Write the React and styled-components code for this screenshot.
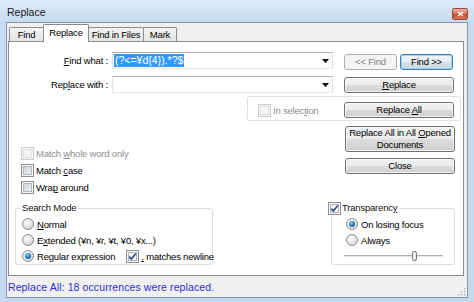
import React from "react";
import styled, { createGlobalStyle, css } from "styled-components";

const UI_FONT = `"Liberation Sans", Arial, sans-serif`;

const GlobalStyle = createGlobalStyle`
  html, body {
    margin: 0;
    padding: 0;
    background: #c6d9ee;
  }
  body {
    width: 474px;
    height: 302px;
    overflow: hidden;
  }
  * {
    box-sizing: border-box;
  }
`;

const Window = styled.div`
  width: 474px;
  height: 302px;
  display: flex;
  flex-direction: column;
  padding: 0 6px 4px;
  background: linear-gradient(180deg, #dfeaf7 0px, #d2e2f4 11px, #c8dbf0 22px, #c4d8ee 100%);
  font-family: ${UI_FONT};
  font-size: 9.5px;
  letter-spacing: -0.2px;
  color: #000;
`;

const TitleBar = styled.div`
  height: 22px;
  flex: none;
  display: flex;
  align-items: flex-start;
  justify-content: space-between;
  padding: 0 0 0 1px;
`;

const Title = styled.span`
  margin-top: 6px;
  font-size: 10.5px;
  letter-spacing: 0;
  line-height: 12px;
  color: #1b1b1b;
`;

const CloseButton = styled.div`
  margin-top: 8px;
  width: 16px;
  height: 12px;
  border: 1px solid #9a4a38;
  border-radius: 2px;
  background: linear-gradient(180deg, #eab2a2 0%, #d97a60 45%, #c7492e 55%, #d8745a 100%);
  display: flex;
  align-items: center;
  justify-content: center;
`;

const Client = styled.div`
  flex: 1;
  display: flex;
  flex-direction: column;
  background: #f0f0f0;
  border: 1px solid #8795a8;
`;

const TabArea = styled.div`
  padding: 1px 3px 0 1px;
  display: flex;
  flex-direction: column;
`;

const TabStrip = styled.div`
  height: 18px;
  display: flex;
  align-items: flex-end;
  padding-left: 2px;
  position: relative;
  z-index: 1;
`;

const Tab = styled.div`
  width: ${(p) => p.$w}px;
  height: ${(p) => (p.$active ? 18 : 14)}px;
  margin-bottom: ${(p) => (p.$active ? 0 : 1)}px;
  margin-left: -1px;
  border: 1px solid #898c95;
  border-bottom: none;
  border-radius: 2px 2px 0 0;
  background: ${(p) => (p.$active ? "#fff" : "linear-gradient(180deg, #f3f3f3 0%, #e4e4e4 100%)")};
  position: relative;
  z-index: ${(p) => (p.$active ? 2 : 1)};
  display: flex;
  align-items: center;
  justify-content: center;
  padding-bottom: ${(p) => (p.$active ? 2 : 0)}px;
  line-height: 12px;
  white-space: nowrap;
`;

const Panel = styled.div`
  margin-top: -1px;
  height: 235px;
  background: #fff;
  border: 1px solid #898c95;
  display: flex;
  flex-direction: column;
  padding: 10px 0;
`;

const FieldRow = styled.div`
  display: flex;
  align-items: flex-start;
  height: ${(p) => p.$h}px;
  margin-top: ${(p) => p.$mt || 0}px;
`;

const FieldLabel = styled.span`
  width: 99px;
  margin-right: 4px;
  text-align: right;
  line-height: 17px;
  white-space: nowrap;
`;

const Combo = styled.div`
  width: 221px;
  height: 17px;
  border: 1px solid;
  border-color: #abadb3 #dbdfe6 #e3e9ef #e2e3ea;
  background: #fff;
  display: flex;
  align-items: center;
  padding: 0 3px 0 1px;
`;

const Selected = styled.span`
  background: #3399ff;
  color: #fff;
  font-size: 10.5px;
  letter-spacing: 0;
  line-height: 13px;
  padding: 0 1px;
  white-space: nowrap;
`;

const Arrow = styled.svg`
  margin-left: auto;
  flex: none;
`;

const ButtonSlot = styled.div`
  margin-left: 11px;
  padding-top: ${(p) => p.$pt}px;
  display: flex;
  gap: 3px;
`;

const Button = styled.div`
  width: ${(p) => p.$w || 110}px;
  height: ${(p) => p.$h || 16}px;
  border: 1px solid #707070;
  border-radius: 3px;
  background: linear-gradient(180deg, #f2f2f2 0%, #ebebeb 50%, #dddddd 51%, #cfcfcf 100%);
  box-shadow: inset 0 0 0 1px rgba(255, 255, 255, 0.75);
  display: flex;
  align-items: center;
  justify-content: center;
  text-align: center;
  line-height: 12px;
  white-space: nowrap;
  flex: none;
  ${(p) =>
    p.$disabled &&
    css`
      border-color: #adb2b5;
      background: #f4f4f4;
      box-shadow: none;
      color: #838383;
    `}
  ${(p) =>
    p.$default &&
    css`
      border-color: #3c7fb1;
      background: linear-gradient(180deg, #f0f4f7 0%, #e8eef2 50%, #d8e1e8 51%, #ccd6de 100%);
      box-shadow: inset 0 0 0 1px #9fd6f5;
    `}
`;

const Key = styled.span`
  text-decoration: underline;
`;

const SelectionBox = styled.div`
  margin: 3px 0 0 238px;
  width: 214px;
  height: 25px;
  border: 1px solid #dde1e6;
  border-radius: 3px;
  display: flex;
  align-items: flex-start;
  justify-content: space-between;
  padding: 5px 6px 0 10px;
`;

const Middle = styled.div`
  margin-top: 5px;
  display: flex;
  justify-content: space-between;
  align-items: flex-start;
  padding: 0 8px 0 12px;
`;

const CheckList = styled.div`
  display: flex;
  flex-direction: column;
  gap: 1px;
  padding-top: 19px;
`;

const ButtonColumn = styled.div`
  display: flex;
  flex-direction: column;
  gap: 6px;
`;

const Bottom = styled.div`
  margin-top: auto;
  display: flex;
  justify-content: space-between;
  align-items: flex-end;
  padding: 0 8px 0 6px;
`;

const Group = styled.fieldset`
  margin: 0;
  width: ${(p) => p.$w}px;
  min-width: 0;
  padding: 1px 0 0 ${(p) => p.$pad}px;
  border: 1px solid #d5dfe5;
  border-radius: 3px;
`;

const GroupTitle = styled.legend`
  padding: 0 2px 0 1px;
  margin-left: ${(p) => p.$offset}px;
  height: 14px;
  line-height: 14px;
  display: flex;
  align-items: center;
  gap: 1px;
  background: #fff;
  color: #111;
`;

const Option = styled.div`
  display: flex;
  align-items: center;
  height: 16px;
  gap: ${(p) => (p.$gap != null ? p.$gap : 2)}px;
  white-space: nowrap;
  color: ${(p) => (p.$disabled ? "#8d8d8d" : "#000")};
  margin-left: ${(p) => p.$ml || 0}px;
`;

const BoxMark = styled.span`
  width: 13px;
  height: 13px;
  flex: none;
  border: 1px solid ${(p) => (p.$disabled ? "#c9cbcd" : "#8e8f8f")};
  background: ${(p) =>
    p.$disabled
      ? "#f5f5f5"
      : p.$checked
      ? "linear-gradient(135deg, #e9ecf0 0%, #fbfbfb 100%)"
      : "linear-gradient(135deg, #c9cdd3 0%, #f6f6f6 100%)"};
  box-shadow: inset 0 0 0 1px #f6f6f6, inset 0 0 0 2px ${(p) => (p.$disabled ? "#e1e1e1" : "#b2b7bd")};
  display: flex;
  align-items: center;
  justify-content: center;
`;

const RadioMark = styled.span`
  width: 12px;
  height: 12px;
  flex: none;
  border-radius: 50%;
  border: 1px solid #8e8f8f;
  background: radial-gradient(circle at 35% 30%, #fbfbfb 0%, #e3e5e8 55%, #c4c8cd 100%);
  position: relative;
  ${(p) =>
    p.$checked &&
    css`
      &::after {
        content: "";
        position: absolute;
        left: 2px;
        top: 2px;
        width: 6px;
        height: 6px;
        border-radius: 50%;
        background: radial-gradient(circle at 40% 35%, #8fd2f6 0%, #2f7fc4 45%, #0d3a6e 100%);
      }
    `}
`;

const Slider = styled.div`
  width: 99px;
  height: 16px;
  margin-left: -2px;
  position: relative;
  display: flex;
  align-items: center;
`;

const Track = styled.div`
  width: 100%;
  height: 3px;
  border-top: 1px solid #b0b0b0;
  border-bottom: 1px solid #fff;
  background: #e6e6e6;
`;

const Thumb = styled.div`
  position: absolute;
  left: 68px;
  top: 3px;
  width: 5px;
  height: 10px;
  border: 1px solid #7c7c7c;
  border-radius: 2px;
  background: linear-gradient(90deg, #fafafa 0%, #dedede 100%);
`;

const StatusBar = styled.div`
  flex: 1;
  display: flex;
  align-items: center;
  justify-content: space-between;
  padding-left: 1px;
  font-size: 10.5px;
  letter-spacing: 0.1px;
  color: #2d2dd6;
`;

const Grip = styled.svg`
  align-self: flex-end;
  margin: 0 1px 1px 0;
`;

const Check = ({ checked, disabled }) => (
  <BoxMark $checked={checked} $disabled={disabled}>
    {checked && (
      <svg width="9" height="9" viewBox="0 0 9 9">
        <path d="M1.2 4.6 L3.4 7 L7.8 1.6" fill="none" stroke="#2e4b8c" strokeWidth="1.6" />
      </svg>
    )}
  </BoxMark>
);

const CheckOption = ({ checked, disabled, children, ml }) => (
  <Option $disabled={disabled} $ml={ml}>
    <Check checked={checked} disabled={disabled} />
    <span>{children}</span>
  </Option>
);

const RadioOption = ({ checked, children }) => (
  <Option $gap={3}>
    <RadioMark $checked={checked} />
    <span>{children}</span>
  </Option>
);

const DropArrow = () => (
  <Arrow width="7" height="4" viewBox="0 0 7 4">
    <path d="M0 0 H7 L3.5 4 Z" fill="#000" />
  </Arrow>
);

const tabs = [
  { label: "Find", w: 35 },
  { label: "Replace", w: 46, active: true },
  { label: "Find in Files", w: 56 },
  { label: "Mark", w: 34 },
];

export default function App() {
  return (
    <>
      <GlobalStyle />
      <Window>
        <TitleBar>
          <Title>Replace</Title>
          <CloseButton>
            <svg width="7" height="6" viewBox="0 0 7 6">
              <path d="M1 1 L6 5 M6 1 L1 5" stroke="#fff" strokeWidth="1.5" />
            </svg>
          </CloseButton>
        </TitleBar>
        <Client>
          <TabArea>
            <TabStrip>
              {tabs.map((t) => (
                <Tab key={t.label} $w={t.w} $active={t.active}>
                  {t.label}
                </Tab>
              ))}
            </TabStrip>
            <Panel>
              <FieldRow $h={18}>
                <FieldLabel>
                  <Key>F</Key>ind what :
                </FieldLabel>
                <Combo>
                  <Selected>(?&lt;=¥d{"{"}4{"}"}).*?$</Selected>
                  <DropArrow />
                </Combo>
                <ButtonSlot $pt={2}>
                  <Button $w={53} $disabled>
                    &lt;&lt; Find
                  </Button>
                  <Button $w={53} $default>
                    Find &gt;&gt;
                  </Button>
                </ButtonSlot>
              </FieldRow>
              <FieldRow $h={17} $mt={6}>
                <FieldLabel>
                  Rep<Key>l</Key>ace with :
                </FieldLabel>
                <Combo>
                  <DropArrow />
                </Combo>
                <ButtonSlot $pt={1}>
                  <Button>
                    <span>
                      <Key>R</Key>eplace
                    </span>
                  </Button>
                </ButtonSlot>
              </FieldRow>
              <SelectionBox>
                <CheckOption disabled>
                  In selec<Key>t</Key>ion
                </CheckOption>
                <Button>
                  <span>
                    Replace <Key>A</Key>ll
                  </span>
                </Button>
              </SelectionBox>
              <Middle>
                <CheckList>
                  <CheckOption disabled>
                    Match <Key>w</Key>hole word only
                  </CheckOption>
                  <CheckOption>
                    Match <Key>c</Key>ase
                  </CheckOption>
                  <CheckOption>
                    Wra<Key>p</Key> around
                  </CheckOption>
                </CheckList>
                <ButtonColumn>
                  <Button $h={26}>
                    <span>
                      Replace All in All <Key>O</Key>pened
                      <br />
                      Documents
                    </span>
                  </Button>
                  <Button>Close</Button>
                </ButtonColumn>
              </Middle>
              <Bottom>
                <Group $w={198} $pad={6}>
                  <GroupTitle $offset={-1}>Search Mode</GroupTitle>
                  <RadioOption>
                    <Key>N</Key>ormal
                  </RadioOption>
                  <RadioOption>
                    E<Key>x</Key>tended (¥n, ¥r, ¥t, ¥0, ¥x...)
                  </RadioOption>
                  <Option $gap={3}>
                    <RadioMark $checked />
                    <span>
                      Re<Key>g</Key>ular expression
                    </span>
                    <CheckOption checked ml={8}>
                      <Key>.</Key> matches newline
                    </CheckOption>
                  </Option>
                </Group>
                <Group $w={124} $pad={14}>
                  <GroupTitle $offset={-19}>
                    <Check checked />
                    <span>
                      Transparenc<Key>y</Key>
                    </span>
                  </GroupTitle>
                  <RadioOption checked>On losing focus</RadioOption>
                  <RadioOption>Always</RadioOption>
                  <Slider>
                    <Track />
                    <Thumb />
                  </Slider>
                </Group>
              </Bottom>
            </Panel>
          </TabArea>
          <StatusBar>
            <span>Replace All: 18 occurrences were replaced.</span>
            <Grip width="9" height="9" viewBox="0 0 9 9">
              {[
                [7, 1],
                [7, 4],
                [4, 4],
                [7, 7],
                [4, 7],
                [1, 7],
              ].map(([x, y]) => (
                <rect key={`${x}-${y}`} x={x} y={y} width="1.5" height="1.5" fill="#b8b8b8" />
              ))}
            </Grip>
          </StatusBar>
        </Client>
      </Window>
    </>
  );
}
